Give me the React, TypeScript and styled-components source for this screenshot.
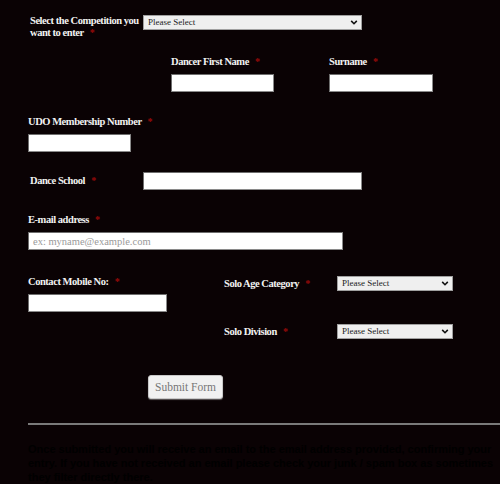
import React, {FC} from 'react';
import styled, {createGlobalStyle} from 'styled-components';

const GlobalStyle = createGlobalStyle`
  html, body {
    margin: 0;
    padding: 0;
    background: #0a0204;
  }
  body {
    width: 500px;
    height: 484px;
    overflow: hidden;
    font-family: "Liberation Serif", "Times New Roman", serif;
  }
`;

const Required: FC = () => <Star>*</Star>;

interface SelectProps {
  width: number;
}

const DropDown: FC<SelectProps> = ({width}) => (
  <SelectWrap $width={width}>
    <Select defaultValue="">
      <option value="">Please Select</option>
    </Select>
    <Chevron viewBox="0 0 10 8" aria-hidden>
      <path d="M1.5 2 L5 5.5 L8.5 2" fill="none" stroke="#111" strokeWidth="2" />
    </Chevron>
  </SelectWrap>
);

const App: FC = () => {
  return (
    <>
      <GlobalStyle />
      <Form>
        <Row $top={15}>
          <Label $width={115} $indent={2}>
            Select the Competition you want to enter <Required />
          </Label>
          <DropDown width={219} />
        </Row>

        <Row $top={17} $indent={143}>
          <Field $width={158}>
            <Label>
              Dancer First Name <Required />
            </Label>
            <TextInput $width={103} />
          </Field>
          <Field>
            <Label>
              Surname <Required />
            </Label>
            <TextInput $width={104} />
          </Field>
        </Row>

        <Row $top={24}>
          <Field>
            <Label>
              UDO Membership Number <Required />
            </Label>
            <TextInput $width={103} />
          </Field>
        </Row>

        <Row $top={20} $align="center">
          <Label $width={115} $indent={2}>
            Dance School <Required />
          </Label>
          <TextInput $width={219} />
        </Row>

        <Row $top={24}>
          <Field>
            <Label>
              E-mail address <Required />
            </Label>
            <TextInput $width={315} placeholder="ex: myname@example.com" />
          </Field>
        </Row>

        <Row $top={26}>
          <Field $width={196}>
            <Label>
              Contact Mobile No: <Required />
            </Label>
            <TextInput $width={139} />
          </Field>
          <Stack>
            <Row $align="center">
              <Label $width={113}>
                Solo Age Category <Required />
              </Label>
              <DropDown width={116} />
            </Row>
            <Row $top={33} $align="center">
              <Label $width={113}>
                Solo Division <Required />
              </Label>
              <DropDown width={116} />
            </Row>
          </Stack>
        </Row>

        <Row $top={36} $indent={120}>
          <SubmitButton type="button">Submit Form</SubmitButton>
        </Row>

        <Divider />

        <Note>
          Once submitted you will receive an email to the email address
          provided, confirming your entry. If you have not received an email
          please check your junk / spam box as sometimes they filter directly
          there.
        </Note>
      </Form>
    </>
  );
};

export default App;

const Form = styled.form`
  padding-left: 28px;
`;

const Row = styled.div<{$top?: number; $indent?: number; $align?: string}>`
  display: flex;
  align-items: ${props => props.$align || 'flex-start'};
  margin-top: ${props => props.$top || 0}px;
  margin-left: ${props => props.$indent || 0}px;
`;

const Field = styled.div<{$width?: number}>`
  display: flex;
  flex-direction: column;
  gap: 6px;
  width: ${props => (props.$width ? `${props.$width}px` : 'auto')};
`;

const Stack = styled.div`
  display: flex;
  flex-direction: column;
`;

const Label = styled.label<{$width?: number; $indent?: number}>`
  display: block;
  box-sizing: border-box;
  width: ${props => (props.$width ? `${props.$width}px` : 'auto')};
  padding-left: ${props => props.$indent || 0}px;
  color: #f2f2f2;
  font-size: 10.5px;
  font-weight: bold;
  letter-spacing: -0.45px;
  line-height: 12px;
`;

const Star = styled.span`
  display: inline-block;
  color: #9b0a0a;
  margin-left: 4px;
  font-size: 10px;
  line-height: 1;
`;

const TextInput = styled.input<{$width: number}>`
  box-sizing: border-box;
  width: ${props => props.$width}px;
  height: 18px;
  margin: 0;
  padding: 0 4px;
  background: #ffffff;
  border: 1px solid #8a8a8a;
  border-top-color: #6e6e6e;
  border-left-color: #6e6e6e;
  font-family: "Liberation Serif", "Times New Roman", serif;
  font-size: 10.5px;
  color: #333;
  outline: none;

  &::placeholder {
    color: #9a9a9a;
  }
`;

const SelectWrap = styled.div<{$width: number}>`
  position: relative;
  width: ${props => props.$width}px;
  height: 15px;
`;

const Select = styled.select`
  appearance: none;
  box-sizing: border-box;
  display: block;
  width: 100%;
  height: 15px;
  margin: 0;
  padding: 0 14px 0 4px;
  background: #efefef;
  border: 1px solid #a0a0a0;
  border-radius: 0;
  font-family: "Liberation Serif", "Times New Roman", serif;
  font-size: 9px;
  line-height: 13px;
  color: #222;
`;

const Chevron = styled.svg`
  position: absolute;
  right: 4px;
  top: 4px;
  width: 8px;
  height: 7px;
  pointer-events: none;
`;

const SubmitButton = styled.button`
  box-sizing: border-box;
  width: 75px;
  height: 24px;
  padding: 0;
  background: #f1f1f1;
  border: 1px solid #c8c8c8;
  border-radius: 3px;
  box-shadow: 0 1px 1px rgba(255, 255, 255, 0.35);
  color: #777;
  font-family: "Liberation Serif", "Times New Roman", serif;
  font-size: 11.5px;
  cursor: pointer;
`;

const Divider = styled.hr`
  margin: 24px 0 0 0;
  height: 0;
  border: none;
  border-top: 2px solid #7a7a7a;
`;

const Note = styled.p`
  margin: 17px 0 0 0;
  padding-right: 2px;
  color: #000000;
  font-family: "Liberation Sans", Arial, sans-serif;
  font-size: 11px;
  font-weight: bold;
  line-height: 14px;
`;
